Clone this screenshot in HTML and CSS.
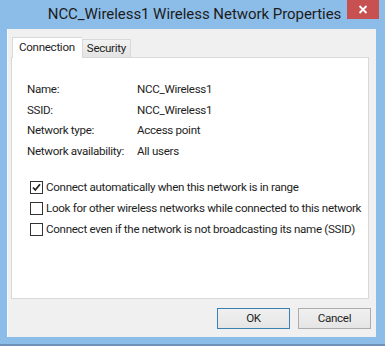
FILE: index.html
```html
<!DOCTYPE html>
<html>
<head>
<meta charset="utf-8">
<link rel="stylesheet" href="styles.css">
</head>
<body>
<div class="window">
  <div class="titlebar">
    <div class="title">NCC_Wireless1 Wireless Network Properties</div>
    <div class="close"><svg width="10" height="9" viewBox="0 0 10 9"><path d="M1.5 1 L8.5 8 M8.5 1 L1.5 8" stroke="#fff" stroke-width="1.8" fill="none"/></svg></div>
  </div>
  <div class="client">
    <div class="tabs">
      <div class="tab active">Connection</div>
      <div class="tab">Security</div>
    </div>
    <div class="panel">
      <div class="props">
        <div class="lbl">Name:</div><div class="val">NCC_Wireless1</div>
        <div class="lbl">SSID:</div><div class="val">NCC_Wireless1</div>
        <div class="lbl">Network type:</div><div class="val">Access point</div>
        <div class="lbl">Network availability:</div><div class="val">All users</div>
      </div>
      <div class="checks">
        <div class="check"><span class="box"><svg width="11" height="11" viewBox="0 0 11 11"><path d="M2 5.5 L4.3 8 L9 2.3" stroke="#222" stroke-width="1.8" fill="none"/></svg></span>Connect automatically when this network is in range</div>
        <div class="check"><span class="box"></span>Look for other wireless networks while connected to this network</div>
        <div class="check"><span class="box"></span>Connect even if the network is not broadcasting its name (SSID)</div>
      </div>
    </div>
    <div class="buttons">
      <div class="btn default">OK</div>
      <div class="btn">Cancel</div>
    </div>
  </div>
  <div class="bottomline"></div>
</div>
</body>
</html>
```

FILE: styles.css
```css
html, body {
  margin: 0;
  padding: 0;
}
body {
  width: 385px;
  height: 346px;
  overflow: hidden;
  font-family: Roboto, "Open Sans", sans-serif;
  font-size: 11.6px;
  letter-spacing: -0.3px;
  color: #1e1e1e;
}
.window {
  width: 385px;
  height: 346px;
  background: #8cbde9;
  display: flex;
  flex-direction: column;
  box-sizing: border-box;
}
.titlebar {
  height: 29px;
  flex: none;
  display: flex;
  position: relative;
}
.title {
  flex: 1;
  text-align: center;
  font-size: 15px;
  letter-spacing: -0.05px;
  line-height: 28px;
  color: #1c1c1c;
  padding-left: 4px;
  white-space: nowrap;
}
.close {
  position: absolute;
  top: 0;
  right: 6px;
  width: 32px;
  height: 19px;
  background: #c75050;
  display: flex;
  align-items: center;
  justify-content: center;
}
.client {
  margin: 0 9px 0 7px;
  height: 308px;
  flex: none;
  background: #f0f0f0;
  border-left: 1px solid #f7fbff;
  box-sizing: border-box;
  padding: 8px 0 0 3px;
  display: flex;
  flex-direction: column;
}
.tabs {
  display: flex;
  align-items: flex-end;
  height: 20px;
  padding-left: 1px;
  position: relative;
  z-index: 1;
}
.tab {
  height: 18px;
  line-height: 17px;
  padding: 0 4px 0 4px;
  border: 1px solid #d9d9d9;
  border-bottom: none;
  background: linear-gradient(#f2f2f2, #e4e4e4);
  box-sizing: border-box;
}
.tab.active {
  height: 21px;
  line-height: 18px;
  background: #fff;
  border-color: #d9d9d9;
  padding: 0 7px 0 6px;
  margin-bottom: -1px;
  border-right: none;
}
.panel {
  width: 358px;
  height: 242px;
  background: #fff;
  border: 1px solid #d9d9d9;
  box-sizing: border-box;
  padding: 23px 0 0 15px;
}
.props {
  display: grid;
  grid-template-columns: 110px auto;
  row-gap: 4px;
  line-height: 16.5px;
  white-space: nowrap;
}
.checks {
  margin-top: 21px;
  display: flex;
  flex-direction: column;
  gap: 7px;
  padding-left: 3px;
}
.check {
  display: flex;
  align-items: center;
  height: 14px;
  white-space: nowrap;
}
.box {
  width: 13px;
  height: 13px;
  box-sizing: border-box;
  border: 1px solid #333;
  background: #fff;
  margin-right: 3px;
  display: flex;
  align-items: center;
  justify-content: center;
  flex: none;
}
.buttons {
  display: flex;
  justify-content: flex-end;
  gap: 8px;
  padding-right: 5px;
  margin-top: 9px;
}
.btn {
  width: 73px;
  height: 21px;
  box-sizing: border-box;
  border: 1px solid #acacac;
  background: linear-gradient(#f0f0f0, #e5e5e5);
  text-align: center;
  line-height: 19px;
}
.btn.default {
  border-color: #3c7fb1;
}
.bottomline {
  margin-top: auto;
  height: 2px;
  background: #6f93b8;
}
```
